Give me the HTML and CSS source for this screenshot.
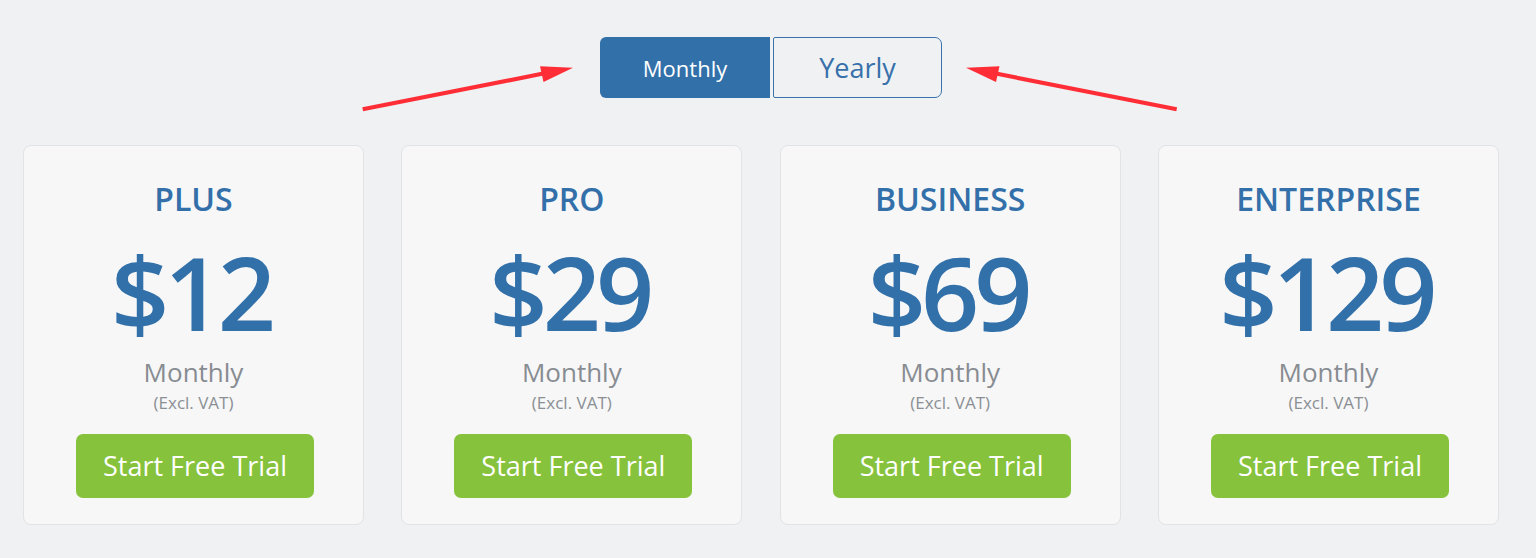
FILE: index.html
```html
<!DOCTYPE html>
<html lang="en">
<head>
<meta charset="utf-8">
<title>Pricing</title>
<link rel="stylesheet" href="styles.css">
</head>
<body>
<div class="page">
  <div class="toggle-wrap">
    <div class="toggle">
      <button class="tg tg-active">Monthly</button>
      <button class="tg tg-outline">Yearly</button>
    </div>
  </div>
  <div class="cards">
    <div class="card">
      <div class="plan">PLUS</div>
      <div class="price">$12</div>
      <div class="period">Monthly</div>
      <div class="vat">(Excl. VAT)</div>
      <button class="trial">Start Free Trial</button>
    </div>
    <div class="card">
      <div class="plan">PRO</div>
      <div class="price">$29</div>
      <div class="period">Monthly</div>
      <div class="vat">(Excl. VAT)</div>
      <button class="trial">Start Free Trial</button>
    </div>
    <div class="card">
      <div class="plan">BUSINESS</div>
      <div class="price">$69</div>
      <div class="period">Monthly</div>
      <div class="vat">(Excl. VAT)</div>
      <button class="trial">Start Free Trial</button>
    </div>
    <div class="card">
      <div class="plan">ENTERPRISE</div>
      <div class="price">$129</div>
      <div class="period">Monthly</div>
      <div class="vat">(Excl. VAT)</div>
      <button class="trial">Start Free Trial</button>
    </div>
  </div>
  <svg class="arrows" width="1536" height="558" viewBox="0 0 1536 558" aria-hidden="true">
    <line x1="362.7" y1="109.3" x2="552" y2="71.8" stroke="#ff2e36" stroke-width="4.2" stroke-linecap="butt"/>
    <polygon points="573,67.7 540,66.2 543.5,82" fill="#ff2e36"/>
    <line x1="1176.7" y1="109.3" x2="987" y2="71.8" stroke="#ff2e36" stroke-width="4.2" stroke-linecap="butt"/>
    <polygon points="966,67.7 999.5,66.2 996,82" fill="#ff2e36"/>
  </svg>
</div>
</body>
</html>
```
FILE: styles.css
```css
* { box-sizing: border-box; }
html, body {
  margin: 0;
  padding: 0;
  background: #f0f1f3;
}
body {
  font-family: "Open Sans", "Liberation Sans", sans-serif;
  width: 1536px;
  height: 558px;
  overflow: hidden;
}
.page {
  position: relative;
  width: 1536px;
  height: 558px;
}
.toggle-wrap {
  display: flex;
  justify-content: center;
  padding-top: 37px;
  padding-left: 6px;
}
.toggle {
  display: flex;
  gap: 3px;
}
.tg {
  font-family: "Open Sans", "Liberation Sans", sans-serif;
  height: 61px;
  margin: 0;
  padding: 0;
  cursor: pointer;
  font-weight: 400;
}
.tg-active {
  width: 170px;
  background: #3270a9;
  color: #ffffff;
  border: none;
  border-radius: 6px 0 0 6px;
  font-size: 22px;
}
.tg-outline {
  width: 169px;
  background: #f0f1f3;
  color: #3770aa;
  border: 1.5px solid #3a73ac;
  border-radius: 2px 7px 7px 2px;
  font-size: 27px;
}
.cards {
  display: grid;
  grid-template-columns: repeat(4, 341px);
  column-gap: 37.33px;
  padding-left: 23px;
  margin-top: 47px;
}
.card {
  height: 380px;
  background: #f7f7f7;
  border: 1.5px solid #e2e3e6;
  border-radius: 8px;
  display: flex;
  flex-direction: column;
  align-items: center;
  padding-top: 37px;
}
.plan {
  font-size: 32px;
  line-height: 32px;
  font-weight: 600;
  color: #3370aa;
}
.price {
  margin-top: 26px;
  font-size: 102px;
  line-height: 102px;
  font-weight: 600;
  color: #3270aa;
  letter-spacing: -5px;
  padding-right: 5px;
}
.period {
  margin-top: 15.5px;
  font-size: 26px;
  line-height: 26px;
  color: #878c92;
}
.vat {
  margin-top: 9px;
  font-size: 17px;
  line-height: 17px;
  color: #8a8f94;
}
.trial {
  margin-top: 23px;
  width: 238px;
  height: 64px;
  border: none;
  border-radius: 7px;
  background: #86c23b;
  color: #ffffff;
  font-family: "Open Sans", "Liberation Sans", sans-serif;
  font-size: 27px;
  font-weight: 400;
  padding: 0;
  margin-left: 3px;
  cursor: pointer;
}
.arrows {
  position: absolute;
  left: 0;
  top: 0;
  pointer-events: none;
}
```
